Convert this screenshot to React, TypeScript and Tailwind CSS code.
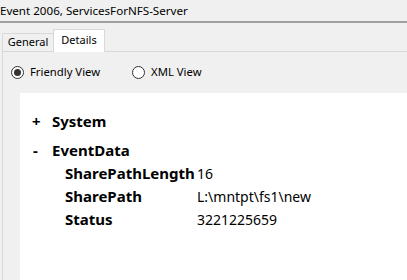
const ui = { fontFamily: '"Noto Sans", "Open Sans", sans-serif' };

function Radio({ checked, label }: { checked?: boolean; label: string }) {
  return (
    <label className="flex items-center gap-[6px]">
      <span className="flex h-[13px] w-[13px] items-center justify-center rounded-full border border-[#333333] bg-white">
        {checked && <span className="h-[7px] w-[7px] rounded-full bg-[#333333]" />}
      </span>
      <span className="text-[11.3px] text-black">{label}</span>
    </label>
  );
}

const fields = [
  { name: "SharePathLength", value: "16" },
  { name: "SharePath", value: "L:\\mntpt\\fs1\\new" },
  { name: "Status", value: "3221225659" },
];

export default function App() {
  return (
    <div className="h-[280px] w-[407px] overflow-hidden bg-[#f0f0f0]" style={ui}>
      <div className="flex h-[21px] items-center text-[11.6px] leading-none text-black">
        Event 2006, ServicesForNFS-Server
      </div>
      <div className="h-[2px] bg-[#a0a0a0]" />

      {/* tabs */}
      <div className="flex h-[28px] items-end pl-[2px]">
        <div className="flex h-[18px] w-[51px] items-center justify-center border-t border-l border-[#d9d9d9] text-[11px] text-black">
          General
        </div>
        <div className="relative z-10 -mb-px flex h-[23px] w-[52px] items-start justify-center border border-b-0 border-[#d9d9d9] bg-white pt-[2px] text-[11px] text-black">
          Details
        </div>
      </div>

      {/* panel */}
      <div className="ml-[2px] border-t border-l border-[#d9d9d9]">
        <div className="flex h-[41px] items-center gap-[32px] pl-[8px]">
          <Radio checked label="Friendly View" />
          <Radio label="XML View" />
        </div>
        <div className="ml-[17px] h-[200px] bg-white pt-[16px] text-black">
          <div className="flex h-[24px] items-center text-[15px] font-bold">
            <span className="w-[32px] pl-[12px]">+</span>
            <span>System</span>
          </div>
          <div className="mt-[5px] flex h-[24px] items-center text-[15px] font-bold">
            <span className="w-[32px] pl-[13px]">-</span>
            <span>EventData</span>
          </div>
          <div className="grid grid-cols-[132px_auto] pl-[45px]">
            {fields.map((f) => (
              <div key={f.name} className="contents">
                <span className="flex h-[23px] items-center text-[15px] font-bold">{f.name}</span>
                <span className="flex h-[23px] items-center text-[14px]">{f.value}</span>
              </div>
            ))}
          </div>
        </div>
      </div>
    </div>
  );
}
